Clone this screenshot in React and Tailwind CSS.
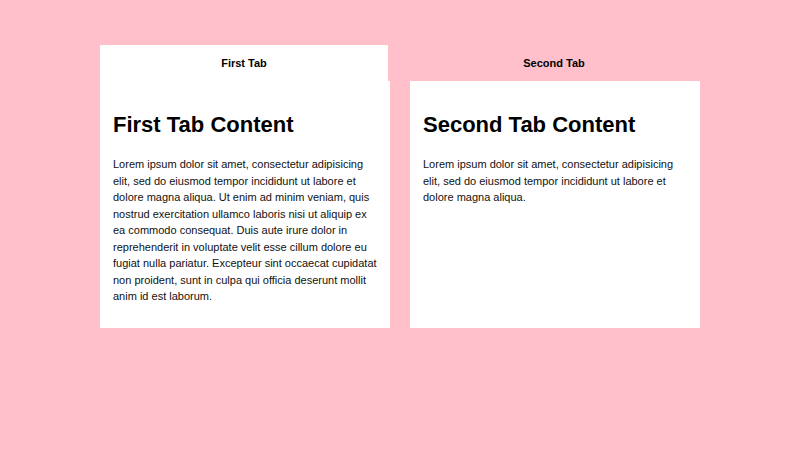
import React, { useState } from "react";

const LOREM_LONG =
  "Lorem ipsum dolor sit amet, consectetur adipisicing elit, sed do eiusmod tempor incididunt ut labore et dolore magna aliqua. Ut enim ad minim veniam, quis nostrud exercitation ullamco laboris nisi ut aliquip ex ea commodo consequat. Duis aute irure dolor in reprehenderit in voluptate velit esse cillum dolore eu fugiat nulla pariatur. Excepteur sint occaecat cupidatat non proident, sunt in culpa qui officia deserunt mollit anim id est laborum.";

const LOREM_SHORT =
  "Lorem ipsum dolor sit amet, consectetur adipisicing elit, sed do eiusmod tempor incididunt ut labore et dolore magna aliqua.";

const tabs = [
  { label: "First Tab", title: "First Tab Content", body: LOREM_LONG },
  { label: "Second Tab", title: "Second Tab Content", body: LOREM_SHORT },
];

export default function App() {
  const [active, setActive] = useState(0);

  return (
    <div
      className="min-h-[450px] w-full bg-[#ffc0cb] pt-[45px] text-[11px]"
      style={{ fontFamily: '"Liberation Sans", Arial, sans-serif' }}
    >
      <div className="mx-auto flex w-[600px] items-start gap-5">
        {tabs.map((tab, i) => (
          <div key={tab.label} className="flex w-[290px] flex-col">
            {/* Tab button */}
            <button
              onClick={() => setActive(i)}
              className={`h-9 w-[288px] text-[11px] font-bold text-black ${
                active === i ? "bg-white" : "bg-transparent"
              }`}
            >
              {tab.label}
            </button>

            {/* Panel */}
            <div className="h-[247px] bg-white px-[13px] pt-[33px]">
              <h2 className="text-[22px] leading-none font-bold text-black">
                {tab.title}
              </h2>
              <p className="mt-5 text-[11px] leading-[16.5px] text-[#111]">
                {tab.body}
              </p>
            </div>
          </div>
        ))}
      </div>
    </div>
  );
}
